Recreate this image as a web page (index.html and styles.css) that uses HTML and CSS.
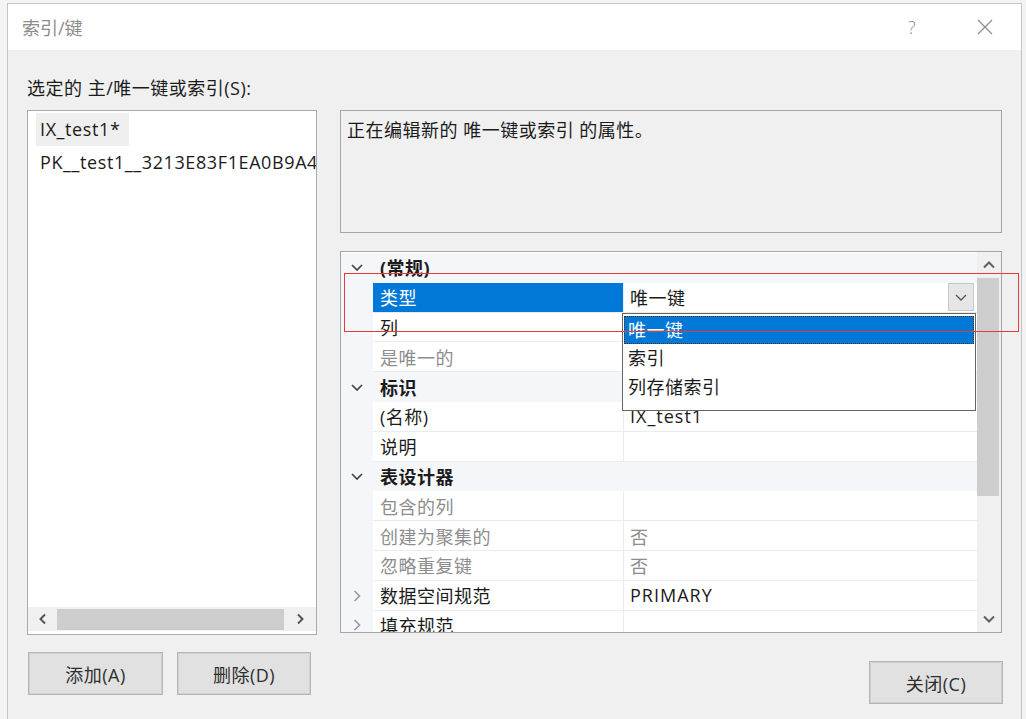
FILE: index.html
```html
<!DOCTYPE html>
<html lang="zh-CN">
<head>
<meta charset="utf-8">
<title>索引/键</title>
<link rel="stylesheet" href="styles.css">
</head>
<body>
<div class="window">
  <div class="titlebar">
    <span class="title">索引/键</span>
    <span class="help">?</span>
    <svg class="close-x" viewBox="0 0 16 16"><path d="M1 1L15 15M15 1L1 15" fill="none" stroke="#8c8c8c" stroke-width="1.2"/></svg>
  </div>
  <div class="content">
    <div class="left">
      <div class="label">选定的 主/唯一键或索引(S):</div>
      <div class="list">
        <div class="items">
          <div class="item"><span class="item-text item-sel">IX_test1*</span></div>
          <div class="item"><span class="item-text">PK__test1__3213E83F1EA0B9A4</span></div>
        </div>
        <div class="hscroll">
          <div class="hs-arrow hs-left"><svg width="9" height="12" viewBox="0 0 9 12"><path d="M7 1.5L2.5 6L7 10.5" fill="none" stroke="#555" stroke-width="2"/></svg></div>
          <div class="hs-thumb"></div>
          <div class="hs-arrow hs-right"><svg width="9" height="12" viewBox="0 0 9 12"><path d="M2 1.5L6.5 6L2 10.5" fill="none" stroke="#555" stroke-width="2"/></svg></div>
        </div>
      </div>
      <div class="btn-row">
        <div class="btn btn-add">添加(A)</div>
        <div class="btn btn-del">删除(D)</div>
      </div>
    </div>
    <div class="right">
      <div class="desc">正在编辑新的 唯一键或索引 的属性。</div>
      <div class="grid">
        <div class="rows">
          <div class="row cat">
            <div class="gutter"><svg width="12" height="7" viewBox="0 0 12 7"><path d="M1 1L6 6L11 1" fill="none" stroke="#444" stroke-width="1.7"/></svg></div>
            <div class="name">(常规)</div><div class="value"></div>
          </div>
          <div class="row">
            <div class="gutter"></div>
            <div class="name sel">类型</div>
            <div class="value">唯一键<span class="dd-btn"><svg width="12" height="7" viewBox="0 0 12 7"><path d="M1 1L6 6L11 1" fill="none" stroke="#555" stroke-width="1.3"/></svg></span></div>
          </div>
          <div class="row">
            <div class="gutter"></div>
            <div class="name">列</div><div class="value"></div>
          </div>
          <div class="row">
            <div class="gutter"></div>
            <div class="name muted">是唯一的</div><div class="value"></div>
          </div>
          <div class="row cat">
            <div class="gutter"><svg width="12" height="7" viewBox="0 0 12 7"><path d="M1 1L6 6L11 1" fill="none" stroke="#444" stroke-width="1.7"/></svg></div>
            <div class="name">标识</div><div class="value"></div>
          </div>
          <div class="row">
            <div class="gutter"></div>
            <div class="name">(名称)</div><div class="value latin">IX_test1</div>
          </div>
          <div class="row">
            <div class="gutter"></div>
            <div class="name">说明</div><div class="value"></div>
          </div>
          <div class="row cat">
            <div class="gutter"><svg width="12" height="7" viewBox="0 0 12 7"><path d="M1 1L6 6L11 1" fill="none" stroke="#444" stroke-width="1.7"/></svg></div>
            <div class="name">表设计器</div><div class="value"></div>
          </div>
          <div class="row">
            <div class="gutter"></div>
            <div class="name muted">包含的列</div><div class="value"></div>
          </div>
          <div class="row">
            <div class="gutter"></div>
            <div class="name muted">创建为聚集的</div><div class="value muted">否</div>
          </div>
          <div class="row">
            <div class="gutter"></div>
            <div class="name muted">忽略重复键</div><div class="value muted">否</div>
          </div>
          <div class="row">
            <div class="gutter"><svg width="8" height="12" viewBox="0 0 8 12"><path d="M1.5 1L6.5 6L1.5 11" fill="none" stroke="#9a9a9a" stroke-width="1.6"/></svg></div>
            <div class="name">数据空间规范</div><div class="value latin">PRIMARY</div>
          </div>
          <div class="row">
            <div class="gutter"><svg width="8" height="12" viewBox="0 0 8 12"><path d="M1.5 1L6.5 6L1.5 11" fill="none" stroke="#9a9a9a" stroke-width="1.6"/></svg></div>
            <div class="name">填充规范</div><div class="value"></div>
          </div>
          <div class="dropdown">
            <div class="dd-item active">唯一键</div>
            <div class="dd-item">索引</div>
            <div class="dd-item">列存储索引</div>
          </div>
        </div>
        <div class="vscroll">
          <div class="vs-arrow"><svg width="12" height="8" viewBox="0 0 12 8"><path d="M1 6.5L6 1.5L11 6.5" fill="none" stroke="#606060" stroke-width="2"/></svg></div>
          <div class="vs-track"><div class="vs-thumb"></div></div>
          <div class="vs-arrow"><svg width="12" height="8" viewBox="0 0 12 8"><path d="M1 1.5L6 6.5L11 1.5" fill="none" stroke="#606060" stroke-width="2"/></svg></div>
        </div>
      </div>
      <div class="close-row"><div class="btn btn-close">关闭(C)</div></div>
    </div>
  </div>
</div>
<div class="annot"></div>
</body>
</html>
```

FILE: styles.css
```css
* { box-sizing: border-box; }
html, body { margin: 0; padding: 0; }
body {
  width: 1026px;
  height: 719px;
  overflow: hidden;
  position: relative;
  background: #f3f3f3;
  font-family: "Open Sans", "Noto Sans CJK SC", sans-serif;
  font-size: 18px;
  letter-spacing: 0.5px;
  color: #1b1b1b;
}
.window {
  margin: 3px 0 0 7px;
  width: 1015px;
  height: 716px;
  border: 1px solid #c4c4c4;
  border-bottom: none;
  background: #f0f0f0;
}
.titlebar {
  height: 46px;
  background: #fff;
  display: flex;
  align-items: center;
  padding-left: 14px;
}
.title { flex: 1; color: #8c8c8c; font-size: 18px; letter-spacing: 0; }
.help { width: 20px; text-align: center; color: #8c8c8c; font-size: 18px; font-weight: 300; }
.close-x { width: 16px; height: 16px; margin-left: 55px; margin-right: 28px; }

.content { display: flex; padding: 28px 0 0 19px; }
.left { width: 290px; display: flex; flex-direction: column; }
.label { height: 20px; line-height: 20px; margin-bottom: 12px; white-space: nowrap; }
.list {
  height: 525px;
  border: 1px solid #a9a9a9;
  background: #fff;
  display: flex;
  flex-direction: column;
  overflow: hidden;
}
.items { flex: 1; padding: 2px 0 0 8px; white-space: nowrap; overflow: hidden; }
.item { height: 33px; line-height: 33px; }
.item-text { display: inline-block; padding: 0 9px 0 4px; letter-spacing: 0.6px; }
.item-sel { background: #efefef; }
.hscroll { height: 24px; margin-bottom: 3px; background: #f0f0f0; display: flex; }
.hs-arrow { display: flex; align-items: center; justify-content: center; }
.hs-left { width: 29px; }
.hs-right { width: 32px; }
.hs-thumb { width: 227px; margin: 2px 0 1px; background: #cdcdcd; }

.btn-row { display: flex; gap: 14px; margin-top: 17px; padding-left: 1px; }
.btn {
  height: 43px;
  background: #e1e1e1;
  border: 1px solid #b4b4b4;
  box-shadow: inset 0 0 0 1px #d2d2d2;
  display: flex;
  align-items: center;
  justify-content: center;
  color: #2e2e2e;
}
.btn-add { width: 135px; }
.btn-del { width: 134px; }

.right { width: 662px; margin-left: 23px; padding-top: 32px; }
.desc {
  height: 123px;
  border: 1px solid #a6a6a6;
  background: #f0f0f0;
  padding: 8px 0 0 6px;
  line-height: 22px;
}
.grid {
  margin-top: 18px;
  height: 382px;
  border: 1px solid #a6a6a6;
  background: #fff;
  display: flex;
}
.rows { width: 636px; position: relative; overflow: hidden; padding-top: 1px; }
.row { display: flex; height: 29.8px; }
.gutter {
  width: 32px;
  background: #f4f6f9;
  display: flex;
  align-items: center;
  justify-content: center;
}
.name {
  width: 251px;
  padding-left: 7px;
  border-right: 1px solid #e9edf3;
  border-bottom: 1px solid #e9edf3;
  display: flex;
  align-items: center;
  white-space: nowrap;
}
.value {
  flex: 1;
  padding-left: 6px;
  border-bottom: 1px solid #e9edf3;
  display: flex;
  align-items: center;
  white-space: nowrap;
}
.value.latin { letter-spacing: 1px; }
.row.cat .name, .row.cat .value {
  background: #f4f6f9;
  border-color: #f4f6f9;
  font-weight: bold;
}
.name.sel { background: #0078d7; color: #fff; }
.muted { color: #8d8d8d; }
.dd-btn {
  margin-left: auto;
  margin-right: 3px;
  width: 26px;
  height: 28px;
  background: #e6e6e6;
  border: 1px solid #c9c9c9;
  display: flex;
  align-items: center;
  justify-content: center;
}
.dropdown {
  position: absolute;
  left: 281px;
  top: 61px;
  width: 354px;
  height: 98px;
  border: 1px solid #646464;
  background: #fff;
  padding: 2px 1px;
}
.dd-item { height: 29px; line-height: 29px; padding-left: 4px; }
.dd-item.active {
  height: 28px;
  line-height: 26px;
  padding-left: 3px;
  background: #0078d7;
  color: #fff;
  border: 1px dotted #4a3420;
}
.vscroll { width: 24px; background: #f0f0f0; display: flex; flex-direction: column; }
.vs-arrow { height: 26px; display: flex; align-items: center; justify-content: center; }
.vs-track { flex: 1; }
.vs-thumb { height: 218px; margin-right: 2px; background: #cdcdcd; }

.close-row { display: flex; justify-content: flex-end; margin-top: 28px; margin-right: -1px; }
.btn-close { width: 134px; }

.annot {
  position: absolute;
  left: 344px;
  top: 273px;
  width: 675px;
  height: 59px;
  border: 1px solid #e83a3a;
}
```
